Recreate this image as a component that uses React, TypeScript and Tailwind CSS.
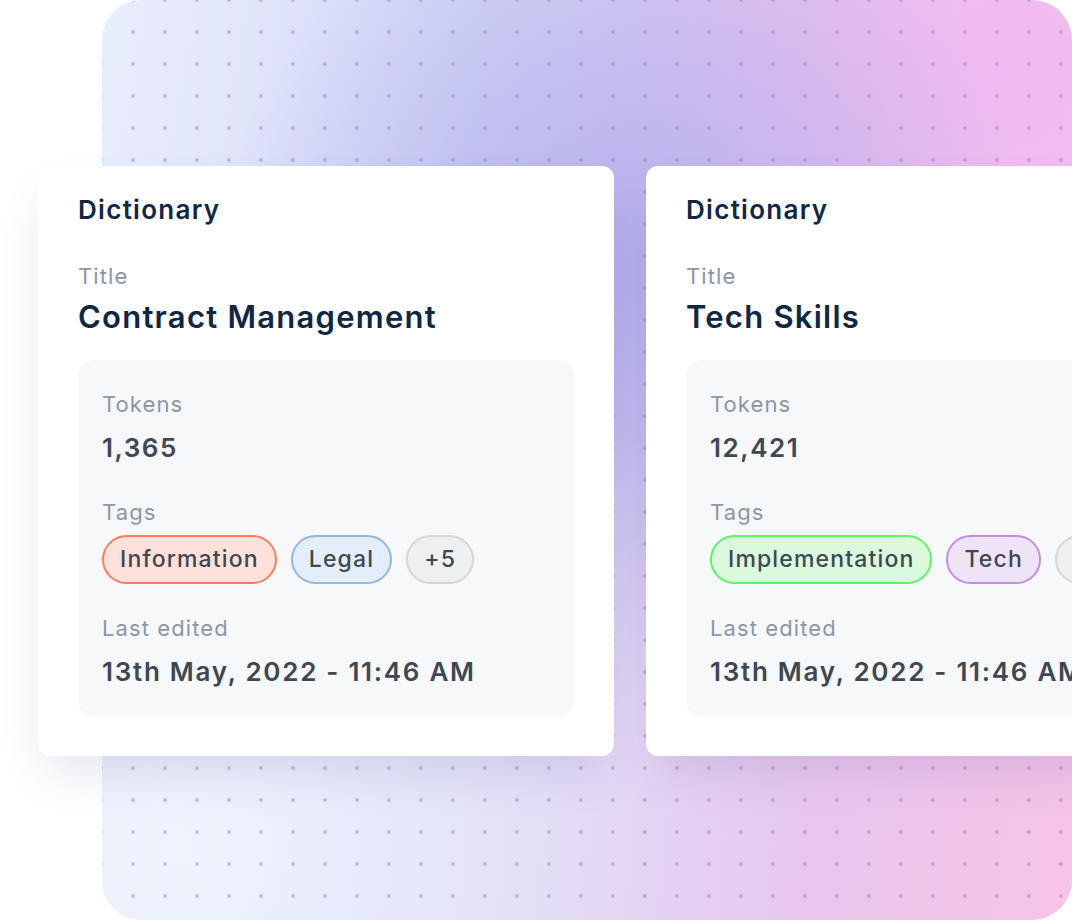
type Tag = { label: string; tone: string };

type Entry = {
  title: string;
  tokens: string;
  tags: Tag[];
  edited: string;
};

const entries: Entry[] = [
  {
    title: "Contract Management",
    tokens: "1,365",
    tags: [
      { label: "Information", tone: "border-[#ff7d5a] bg-[#fde1da]" },
      { label: "Legal", tone: "border-[#92b6ea] bg-[#e4eefa]" },
      { label: "+5", tone: "border-[#d5d6d9] bg-[#eeeff1]" },
    ],
    edited: "13th May, 2022 - 11:46 AM",
  },
  {
    title: "Tech Skills",
    tokens: "12,421",
    tags: [
      { label: "Implementation", tone: "border-[#5ef466] bg-[#daf9dd]" },
      { label: "Tech", tone: "border-[#c38ce9] bg-[#efe4f7]" },
      { label: "+3", tone: "border-[#d5d6d9] bg-[#eeeff1]" },
    ],
    edited: "13th May, 2022 - 11:46 AM",
  },
];

export default function App() {
  return (
    <div className="relative h-[920px] w-[1072px] overflow-hidden bg-white font-['Inter',sans-serif]">
      {/* gradient backdrop with dot grid */}
      <div className="absolute left-[102px] top-0 h-[920px] w-[970px] overflow-hidden rounded-[40px] bg-[radial-gradient(ellipse_42%_48%_at_54%_30%,rgba(176,172,236,0.95),rgba(176,172,236,0)_100%),radial-gradient(ellipse_45%_45%_at_92%_8%,rgba(242,184,242,0.9),rgba(242,184,242,0)_100%),linear-gradient(100deg,#e9eefc_0%,#d3d7f7_35%,#e2c8ef_65%,#f8c3e8_100%)]">
        <div className="absolute inset-0 bg-[radial-gradient(ellipse_at_8%_92%,rgba(240,244,253,0.95),rgba(240,244,253,0)_50%)]" />
        <div className="absolute inset-0 bg-[radial-gradient(circle,rgba(125,115,170,0.42)_1.5px,transparent_2px)] bg-[length:32px_32px] bg-[position:15px_16px]" />
      </div>

      <div className="relative flex gap-8 pl-[38px] pt-[166px]">
        {entries.map((e) => (
          <DictionaryCard key={e.title} entry={e} />
        ))}
      </div>
    </div>
  );
}

function DictionaryCard({ entry }: { entry: Entry }) {
  return (
    <div className="w-[576px] shrink-0 rounded-xl bg-white px-10 pb-10 pt-7 shadow-[0_24px_48px_-10px_rgba(90,80,150,0.16)]">
      <h2 className="text-[26px] font-semibold leading-8 tracking-[0.05em] text-[#0f2744]">Dictionary</h2>
      <p className="mt-9 text-[22px] leading-7 tracking-[0.05em] text-[#8b97a4]">Title</p>
      <p className="mt-2 text-[31px] font-semibold leading-[38px] tracking-[0.04em] text-[#0f2744]">{entry.title}</p>

      <div className="mt-6 rounded-2xl bg-[#f7f8fa] px-6 pb-7 pt-[30px]">
        <p className="text-[22px] leading-7 tracking-[0.05em] text-[#8b97a4]">Tokens</p>
        <p className="mt-[14px] text-[26px] font-semibold leading-8 tracking-[0.06em] text-[#3d4853]">{entry.tokens}</p>

        <p className="mt-[34px] text-[22px] leading-7 tracking-[0.05em] text-[#8b97a4]">Tags</p>
        <div className="mt-[9px] flex flex-nowrap gap-[14px]">
          {entry.tags.map((t) => (
            <span
              key={t.label}
              className={`flex h-[49px] shrink-0 items-center rounded-full border-2 px-4 text-[23px] font-medium tracking-[0.05em] text-[#3d4853] ${t.tone}`}
            >
              {t.label}
            </span>
          ))}
        </div>

        <p className="mt-[30px] text-[22px] leading-7 tracking-[0.05em] text-[#8b97a4]">Last edited</p>
        <p className="mt-[14px] whitespace-nowrap text-[26px] font-semibold leading-8 tracking-[0.066em] text-[#3d4853]">{entry.edited}</p>
      </div>
    </div>
  );
}
